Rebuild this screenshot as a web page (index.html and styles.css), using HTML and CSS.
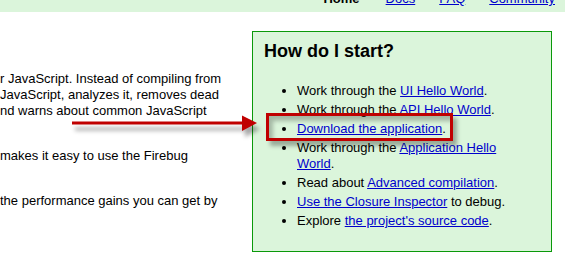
FILE: index.html
```html
<!DOCTYPE html>
<html lang="en">
<head>
  <meta charset="UTF-8">
  <title>Closure Tools</title>
  <link rel="stylesheet" href="styles.css">
</head>
<body>

<div class="topbar">
  <nav class="nav">
    <b>Home</b>
    <a href="#">Docs</a>
    <a href="#">FAQ</a>
    <a href="#">Community</a>
  </nav>
</div>

<div class="content">
  <div class="intro">
    <p>r JavaScript. Instead of compiling from<br>JavaScript, analyzes it, removes dead<br>nd warns about common JavaScript</p>
    <p>makes it easy to use the Firebug</p>
    <p>the performance gains you can get by</p>
  </div>

  <div class="start-box">
    <h3>How do I start?</h3>
    <ul>
      <li>Work through the <a href="#">UI Hello World</a>.</li>
      <li>Work through the <a href="#">API Hello World</a>.</li>
      <li><a href="#">Download the application</a>.</li>
      <li>Work through the <a href="#">Application Hello World</a>.</li>
      <li>Read about <a href="#">Advanced compilation</a>.</li>
      <li><a href="#">Use the Closure Inspector</a> to debug.</li>
      <li>Explore <a href="#">the project's source code</a>.</li>
    </ul>
  </div>
</div>

<!-- annotation layer -->
<svg class="arrow" width="200" height="36" viewBox="0 0 200 36">
  <line x1="2" y1="13" x2="174" y2="13" stroke="#c00000" stroke-width="3"/>
  <polygon points="172,5.5 187,13 172,21" fill="#c00000"/>
</svg>
<div class="callout"></div>

</body>
</html>
```

FILE: styles.css
```css
* { box-sizing: border-box; }

body {
  margin: 0;
  position: relative;
  font-family: 'Liberation Sans', Arial, sans-serif;
  font-size: 13px;
  line-height: 16px;
  color: #000;
  background: #fff;
}

a { color: #0000cc; }

/* Top navigation */
.topbar {
  width: 565px;
  height: 12px;
  background: #dbf5db;
  overflow: hidden;
}

.nav {
  display: flex;
  justify-content: flex-end;
  gap: 24px;
  padding-right: 10px;
  margin-top: -9px;
}

.nav b { margin-right: 2px; }

/* Page content */
.content {
  display: flex;
  margin-top: 19px;
}

.intro {
  width: 252px;
  padding-top: 40px;
  white-space: nowrap;
  overflow: hidden;
}

.intro p {
  margin: 0 0 29px;
}

.start-box {
  width: 300px;
  background: #dbf5db;
  border: 1px solid #0a990a;
  padding: 9px 20px 22px 11px;
}

.start-box h3 {
  margin: 0;
  font-size: 18px;
  line-height: 21px;
  font-weight: bold;
}

.start-box ul {
  margin: 21px 0 0;
  padding-left: 33px;
}

.start-box li {
  margin-top: 3px;
}

.start-box li:first-child { margin-top: 0; }

/* Annotation */
.arrow {
  position: absolute;
  left: 70px;
  top: 110px;
  overflow: visible;
  filter: drop-shadow(3px 6px 2px rgba(0, 0, 0, 0.35));
}

.callout {
  position: absolute;
  left: 266px;
  top: 113px;
  width: 187px;
  height: 28px;
  border: 3px solid #c00000;
  box-shadow: 4px 5px 4px rgba(0, 0, 0, 0.3), inset 4px 5px 4px rgba(0, 0, 0, 0.25);
}
```
